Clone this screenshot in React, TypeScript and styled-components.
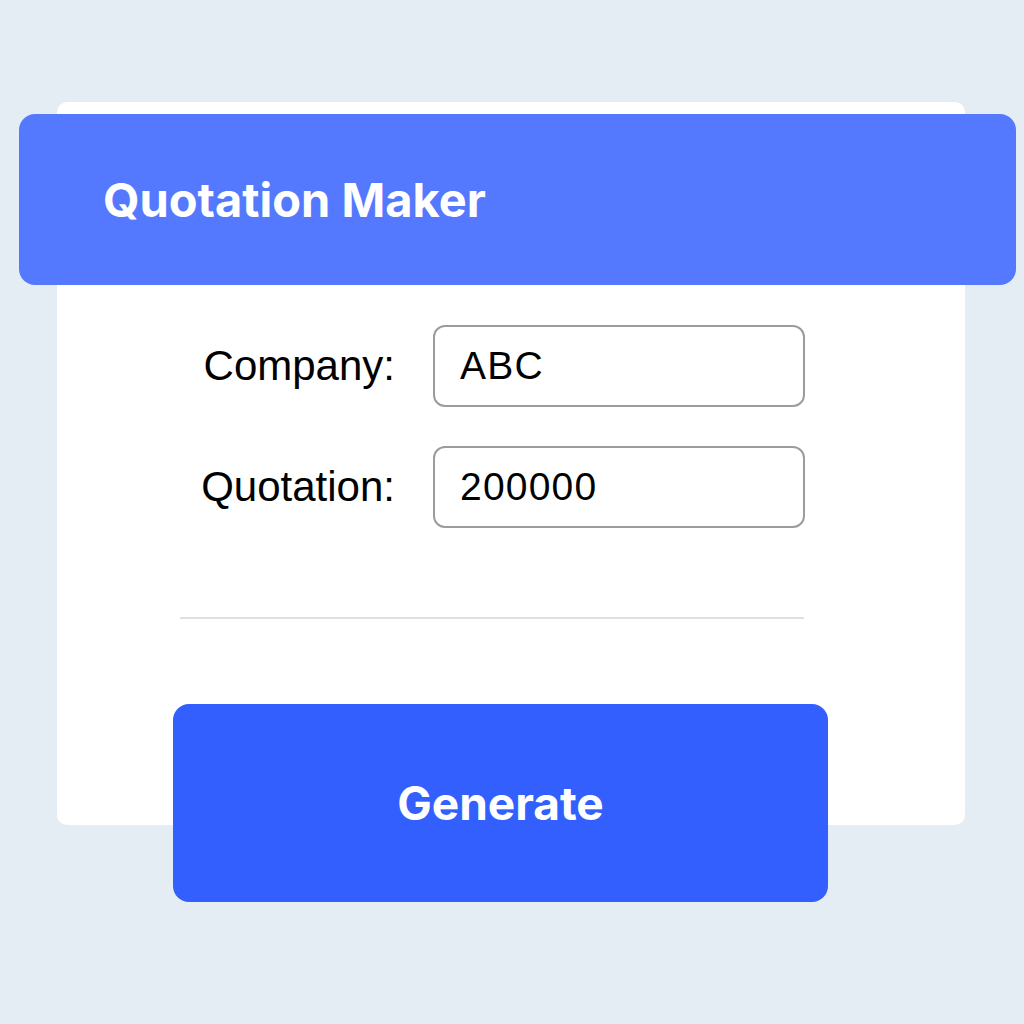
import React from 'react';
import styled, { createGlobalStyle } from 'styled-components';

const GlobalStyle = createGlobalStyle`
  html, body {
    margin: 0;
    padding: 0;
    background: #e5edf4;
  }
  * {
    box-sizing: border-box;
  }
`;

const Page = styled.div`
  width: 1024px;
  height: 1024px;
  padding: 102px 0 0 57px;
  background: #e5edf4;
  font-family: 'Liberation Sans', Arial, sans-serif;
`;

const Card = styled.div`
  width: 908px;
  height: 723px;
  background: #ffffff;
  border-radius: 10px;
  padding-top: 12px;
  display: flex;
  flex-direction: column;
`;

const Header = styled.div`
  flex-shrink: 0;
  height: 171px;
  margin: 0 -51px 0 -38px;
  padding-left: 84px;
  display: flex;
  align-items: center;
  background: #5479fe;
  border-radius: 16px;
`;

const Title = styled.h1`
  margin: 0;
  color: #ffffff;
  font-family: Inter, 'Liberation Sans', sans-serif;
  font-size: 47px;
  font-weight: 700;
  letter-spacing: 0;
  line-height: 1;
`;

const Form = styled.div`
  flex-shrink: 0;
  display: grid;
  grid-template-columns: 338px 372px;
  column-gap: 38px;
  row-gap: 39px;
  margin-top: 40px;
  align-items: center;
`;

const Label = styled.label`
  justify-self: end;
  color: #000000;
  font-size: 42px;
  line-height: 1;
  letter-spacing: 0;
`;

const Field = styled.input`
  width: 372px;
  height: 82px;
  padding: 0 0 0 25px;
  border: 2px solid #9c9c9c;
  border-radius: 12px;
  background: #ffffff;
  color: #000000;
  font-family: 'Liberation Sans', Arial, sans-serif;
  font-size: 39px;
  letter-spacing: 1.2px;
  outline: none;
`;

const Divider = styled.hr`
  flex-shrink: 0;
  width: 624px;
  height: 2px;
  margin: 89px 0 0 123px;
  border: none;
  background: #dfe0e2;
`;

const GenerateButton = styled.button`
  flex-shrink: 0;
  width: 655px;
  height: 198px;
  margin: 85px 0 0 116px;
  border: none;
  border-radius: 16px;
  background: #335fff;
  color: #ffffff;
  font-family: Inter, 'Liberation Sans', sans-serif;
  font-size: 46px;
  font-weight: 700;
  letter-spacing: 0;
  cursor: pointer;
`;

const fields = [
  { id: 'company', label: 'Company:', value: 'ABC' },
  { id: 'quotation', label: 'Quotation:', value: '200000' },
];

const App: React.FC = () => {
  return (
    <>
      <GlobalStyle />
      <Page>
        <Card>
          <Header>
            <Title>Quotation Maker</Title>
          </Header>
          <Form>
            {fields.map((f) => (
              <React.Fragment key={f.id}>
                <Label htmlFor={f.id}>{f.label}</Label>
                <Field id={f.id} value={f.value} readOnly />
              </React.Fragment>
            ))}
          </Form>
          <Divider />
          <GenerateButton>Generate</GenerateButton>
        </Card>
      </Page>
    </>
  );
};

export default App;
